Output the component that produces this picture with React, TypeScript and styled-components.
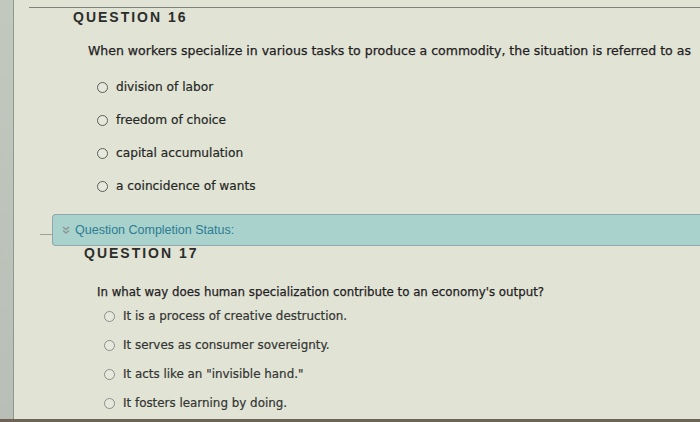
import React from "react";
import styled, { createGlobalStyle } from "styled-components";

const GlobalStyle = createGlobalStyle`
  html, body {
    margin: 0;
    padding: 0;
    background: #e1e3d5;
  }
`;

type QuestionData = {
  number: number;
  text: string;
  options: string[];
};

const QUESTIONS: QuestionData[] = [
  {
    number: 16,
    text: "When workers specialize in various tasks to produce a commodity, the situation is referred to as",
    options: [
      "division of labor",
      "freedom of choice",
      "capital accumulation",
      "a coincidence of wants",
    ],
  },
  {
    number: 17,
    text: "In what way does human specialization contribute to an economy's output?",
    options: [
      "It is a process of creative destruction.",
      "It serves as consumer sovereignty.",
      'It acts like an "invisible hand."',
      "It fosters learning by doing.",
    ],
  },
];

const Page = styled.div`
  display: flex;
  width: 700px;
  height: 422px;
  overflow: hidden;
  background: #e1e3d5;
  border-bottom: 3px solid #6e6455;
  box-sizing: border-box;
`;

const Strip = styled.div`
  width: 13px;
  flex-shrink: 0;
  background: linear-gradient(180deg, #c3c8bf 0%, #b9bfb6 100%);
  border-right: 1px solid #8f978f;
`;

const Main = styled.div`
  flex: 1;
  display: flex;
  flex-direction: column;
  padding-top: 7px;
`;

const TopRule = styled.div`
  height: 1px;
  margin-left: 15px;
  background: #7c837d;
`;

const Section = styled.section<{ $indent: number; $top: number }>`
  display: flex;
  flex-direction: column;
  padding-left: ${(p) => p.$indent}px;
  margin-top: ${(p) => p.$top}px;
`;

const Heading = styled.h2<{ $lh: number }>`
  margin: 0;
  font-family: "Liberation Sans", Arial, sans-serif;
  font-weight: 700;
  font-size: 14px;
  line-height: ${(p) => p.$lh}px;
  letter-spacing: 2px;
  color: #2b2d2b;
`;

const Prompt = styled.p<{ $indent: number; $top: number; $size: number }>`
  margin: ${(p) => p.$top}px 0 0 ${(p) => p.$indent}px;
  font-family: "DejaVu Sans", Verdana, sans-serif;
  font-size: ${(p) => p.$size}px;
  line-height: 16px;
  color: #1f211f;
  white-space: nowrap;
  -webkit-text-stroke: 0.25px #1f211f;
`;

const Options = styled.div<{ $indent: number; $top: number; $gap: number }>`
  display: flex;
  flex-direction: column;
  gap: ${(p) => p.$gap}px;
  margin: ${(p) => p.$top}px 0 0 ${(p) => p.$indent}px;
`;

const Option = styled.label<{ $size: number; $color: string }>`
  display: flex;
  align-items: center;
  gap: 8px;
  height: 16px;
  font-family: "DejaVu Sans", Verdana, sans-serif;
  font-size: ${(p) => p.$size}px;
  color: ${(p) => p.$color};
  white-space: nowrap;
  -webkit-text-stroke: 0.2px ${(p) => p.$color};
`;

const Radio = styled.span<{ $tone: string }>`
  width: 11px;
  height: 11px;
  border-radius: 50%;
  box-sizing: border-box;
  border: 1.5px solid ${(p) => p.$tone};
  background: #e6e8dc;
  flex-shrink: 0;
`;

const StatusBar = styled.div`
  position: relative;
  display: flex;
  align-items: center;
  gap: 5px;
  height: 32px;
  box-sizing: border-box;
  margin: 20px 0 0 38px;
  padding-left: 9px;
  background: #a9d2cd;
  border: 1px solid #8fa7ad;
  border-right: none;
  border-radius: 4px 0 0 4px;
  font-family: "Liberation Sans", Arial, sans-serif;
  font-size: 12.5px;
  color: #2d7c92;

  &::before {
    content: "";
    position: absolute;
    left: -13px;
    top: 19px;
    width: 12px;
    height: 1px;
    background: #9aa39b;
  }
`;

const Chevrons = () => (
  <svg width="8" height="8" viewBox="0 0 8 8" aria-hidden="true">
    <path d="M1 1 L4 3.5 L7 1" fill="none" stroke="#8c9896" strokeWidth="1.6" />
    <path d="M1 4.5 L4 7 L7 4.5" fill="none" stroke="#8c9896" strokeWidth="1.6" />
  </svg>
);

type Layout = {
  indent: number;
  top: number;
  headLh: number;
  promptIndent: number;
  promptTop: number;
  promptSize: number;
  optIndent: number;
  optTop: number;
  optGap: number;
  optSize: number;
  optColor: string;
  radioTone: string;
};

const LAYOUTS: Layout[] = [
  {
    indent: 59,
    top: 1,
    headLh: 16,
    promptIndent: 15,
    promptTop: 18,
    promptSize: 12.5,
    optIndent: 24,
    optTop: 20,
    optGap: 17,
    optSize: 12.2,
    optColor: "#252725",
    radioTone: "#5a5e5a",
  },
  {
    indent: 70,
    top: 0,
    headLh: 14,
    promptIndent: 13,
    promptTop: 24,
    promptSize: 11.8,
    optIndent: 20,
    optTop: 8,
    optGap: 13,
    optSize: 11.9,
    optColor: "#333533",
    radioTone: "#8a8f8a",
  },
];

const Question = ({ q, l }: { q: QuestionData; l: Layout }) => (
  <Section $indent={l.indent} $top={l.top}>
    <Heading $lh={l.headLh}>QUESTION {q.number}</Heading>
    <Prompt $indent={l.promptIndent} $top={l.promptTop} $size={l.promptSize}>
      {q.text}
    </Prompt>
    <Options $indent={l.optIndent} $top={l.optTop} $gap={l.optGap}>
      {q.options.map((o) => (
        <Option key={o} $size={l.optSize} $color={l.optColor}>
          <Radio $tone={l.radioTone} />
          {o}
        </Option>
      ))}
    </Options>
  </Section>
);

export default function App() {
  return (
    <>
      <GlobalStyle />
      <Page>
        <Strip />
        <Main>
          <TopRule />
          <Question q={QUESTIONS[0]} l={LAYOUTS[0]} />
          <StatusBar>
            <Chevrons />
            Question Completion Status:
          </StatusBar>
          <Question q={QUESTIONS[1]} l={LAYOUTS[1]} />
        </Main>
      </Page>
    </>
  );
}
